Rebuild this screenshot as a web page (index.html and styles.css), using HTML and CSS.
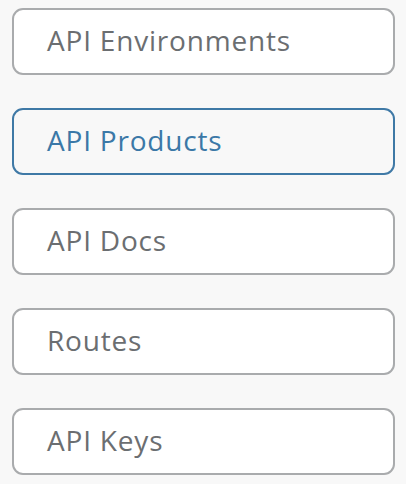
FILE: index.html
```html
<!DOCTYPE html>
<html>
<head>
<meta charset="utf-8">
<link rel="stylesheet" href="styles.css">
</head>
<body>
<nav class="menu">
  <div class="item">API Environments</div>
  <div class="item active">API Products</div>
  <div class="item">API Docs</div>
  <div class="item">Routes</div>
  <div class="item">API Keys</div>
</nav>
</body>
</html>
```
FILE: styles.css
```css
html, body {
  margin: 0;
  padding: 0;
  background: #f8f8f8;
}
.menu {
  display: flex;
  flex-direction: column;
  gap: 33px;
  padding: 8px 11px 0 12px;
  font-family: "Open Sans", "Noto Sans", sans-serif;
}
.item {
  box-sizing: border-box;
  height: 67px;
  border: 2px solid #a9abad;
  border-radius: 11px;
  background: #ffffff;
  color: #6b6e71;
  font-size: 28px;
  letter-spacing: 0.8px;
  display: flex;
  align-items: center;
  padding-left: 33px;
  padding-bottom: 4px;
}
.item.active {
  border-color: #3f79a6;
  color: #3b78a7;
  background: #f8f8f8;
}
```
